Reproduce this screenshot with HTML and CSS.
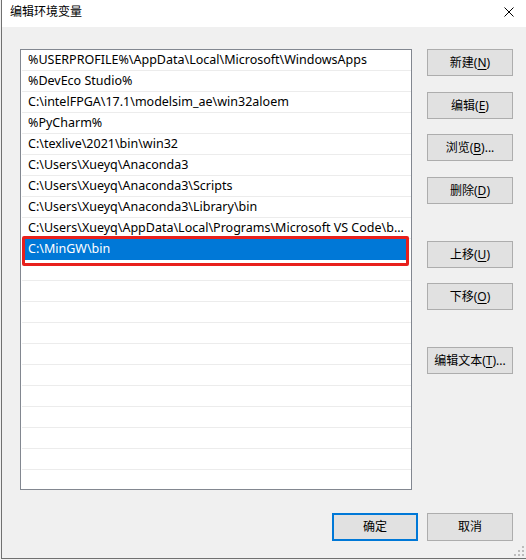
FILE: index.html
```html
<!DOCTYPE html>
<html lang="zh-CN">
<head>
<meta charset="utf-8">
<title>编辑环境变量</title>
<link rel="stylesheet" href="styles.css">
</head>
<body>
<div class="window">
  <div class="titlebar">
    <span class="title">编辑环境变量</span>
    <span class="close">
      <svg width="10" height="10" viewBox="0 0 10 10"><path d="M0.5 0.5 L9.5 9.5 M9.5 0.5 L0.5 9.5" stroke="#000" stroke-width="1" fill="none"/></svg>
    </span>
  </div>
  <div class="main">
    <div class="list">
      <div class="row">%USERPROFILE%\AppData\Local\Microsoft\WindowsApps</div>
      <div class="row">%DevEco Studio%</div>
      <div class="row">C:\intelFPGA\17.1\modelsim_ae\win32aloem</div>
      <div class="row">%PyCharm%</div>
      <div class="row">C:\texlive\2021\bin\win32</div>
      <div class="row">C:\Users\Xueyq\Anaconda3</div>
      <div class="row">C:\Users\Xueyq\Anaconda3\Scripts</div>
      <div class="row">C:\Users\Xueyq\Anaconda3\Library\bin</div>
      <div class="row">C:\Users\Xueyq\AppData\Local\Programs\Microsoft VS Code\b...</div>
      <div class="row selected">C:\MinGW\bin</div>
      <div class="row"></div>
      <div class="row"></div>
      <div class="row"></div>
      <div class="row"></div>
      <div class="row"></div>
      <div class="row"></div>
      <div class="row"></div>
      <div class="row"></div>
      <div class="row"></div>
      <div class="row"></div>
      <div class="highlight"></div>
    </div>
    <div class="buttons">
      <button class="btn b-new">新建(<u>N</u>)</button>
      <button class="btn b-edit">编辑(<u>E</u>)</button>
      <button class="btn b-browse">浏览(<u>B</u>)...</button>
      <button class="btn b-del">删除(<u>D</u>)</button>
      <button class="btn b-up">上移(<u>U</u>)</button>
      <button class="btn b-down">下移(<u>O</u>)</button>
      <button class="btn b-text">编辑文本(<u>T</u>)...</button>
    </div>
  </div>
  <div class="footer">
    <button class="btn primary">确定</button>
    <button class="btn">取消</button>
  </div>
  <svg class="grip" width="10" height="10" viewBox="0 0 10 10">
    <rect x="8" y="0" width="2" height="2" fill="#bcbcbc"/>
    <rect x="4" y="4" width="2" height="2" fill="#bcbcbc"/>
    <rect x="8" y="4" width="2" height="2" fill="#bcbcbc"/>
    <rect x="0" y="8" width="2" height="2" fill="#bcbcbc"/>
    <rect x="4" y="8" width="2" height="2" fill="#bcbcbc"/>
    <rect x="8" y="8" width="2" height="2" fill="#bcbcbc"/>
  </svg>
</div>
</body>
</html>
```

FILE: styles.css
```css
* { box-sizing: border-box; }
html, body {
  margin: 0;
  padding: 0;
  background: #f0f0f0;
}
body {
  font-family: "Noto Sans", "Noto Sans CJK SC", sans-serif;
  font-size: 12px;
  color: #000;
}
.window {
  position: relative;
  margin-left: 1px;
  width: 525px;
  height: 559px;
  border-left: 1px solid #707070;
  border-bottom: 1px solid #707070;
  background: #f0f0f0;
  display: flex;
  flex-direction: column;
}
.titlebar {
  height: 27px;
  background: #fff;
  display: flex;
  align-items: center;
  justify-content: space-between;
  padding: 0 12px 3px 8px;
}
.title {
  font-size: 12px;
  line-height: 16px;
}
.close {
  display: flex;
  width: 10px;
  height: 10px;
}
.main {
  display: flex;
  padding: 22px 0 0 18px;
}
.list {
  position: relative;
  width: 392px;
  height: 441px;
  border: 1px solid #828790;
  background: #fff;
  overflow: hidden;
}
.row {
  height: 21px;
  line-height: 20px;
  margin-left: 1px;
  padding-left: 6px;
  border-bottom: 1px solid #ececec;
  white-space: nowrap;
  overflow: hidden;
  font-size: 12.5px;
}
.row.selected {
  background: #0078d7;
  color: #fff;
  border-bottom-color: #0078d7;
  margin-left: 4px;
  margin-right: 5px;
  padding-left: 3px;
  margin-top: -1px;
  height: 22px;
  line-height: 21px;
}
.highlight {
  position: absolute;
  left: 1px;
  top: 186px;
  width: 387px;
  height: 30px;
  border: 3px solid #e8201c;
  border-radius: 2px;
}
.buttons {
  display: flex;
  flex-direction: column;
  margin-left: 15px;
}
.btn {
  width: 86px;
  height: 27px;
  padding: 0;
  border: 1px solid #adadad;
  background: #e1e1e1;
  font-family: "Noto Sans", "Noto Sans CJK SC", sans-serif;
  font-size: 12px;
  color: #000;
  line-height: 16px;
}
.btn u { text-underline-offset: 2px; }
.b-edit { margin-top: 16px; }
.b-browse { margin-top: 15px; }
.b-del { margin-top: 16px; }
.b-up { margin-top: 37px; }
.b-down { margin-top: 15px; }
.b-text { margin-top: 37px; }
.footer {
  display: flex;
  justify-content: flex-end;
  gap: 9px;
  padding: 23px 13px 0 0;
}
.footer .btn {
  height: 28px;
}
.footer .primary {
  border: 2px solid #0078d7;
}
.grip {
  position: absolute;
  right: 2px;
  bottom: 2px;
}
```
